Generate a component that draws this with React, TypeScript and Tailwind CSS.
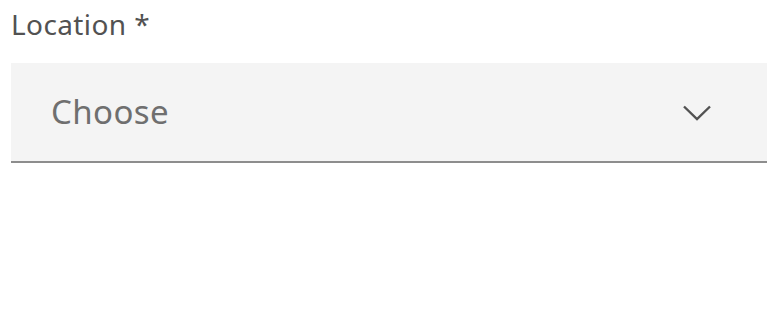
export default function App() {
  return (
    <div className="w-[775px] h-[317px] bg-white px-[11px] pt-[4px] font-['Noto_Sans',sans-serif]">
      <label className="block text-[28px] leading-[40px] text-[#525252] tracking-[0.4px]">
        Location *
      </label>
      <div className="mt-[19px] mr-[-3px] h-[100px] bg-[#f4f4f4] border-b-2 border-[#8d8d8d] flex items-center pl-[40px] pr-[56px]">
        <span className="flex-1 text-[33px] text-[#6f6f6f] tracking-[0.4px]">Choose</span>
        <svg width="28" height="16" viewBox="0 0 28 16" fill="none" className="text-[#525252] mt-[2px]">
          <path d="M1 1.5 L14 14 L27 1.5" stroke="currentColor" strokeWidth="2.4" />
        </svg>
      </div>
    </div>
  );
}
